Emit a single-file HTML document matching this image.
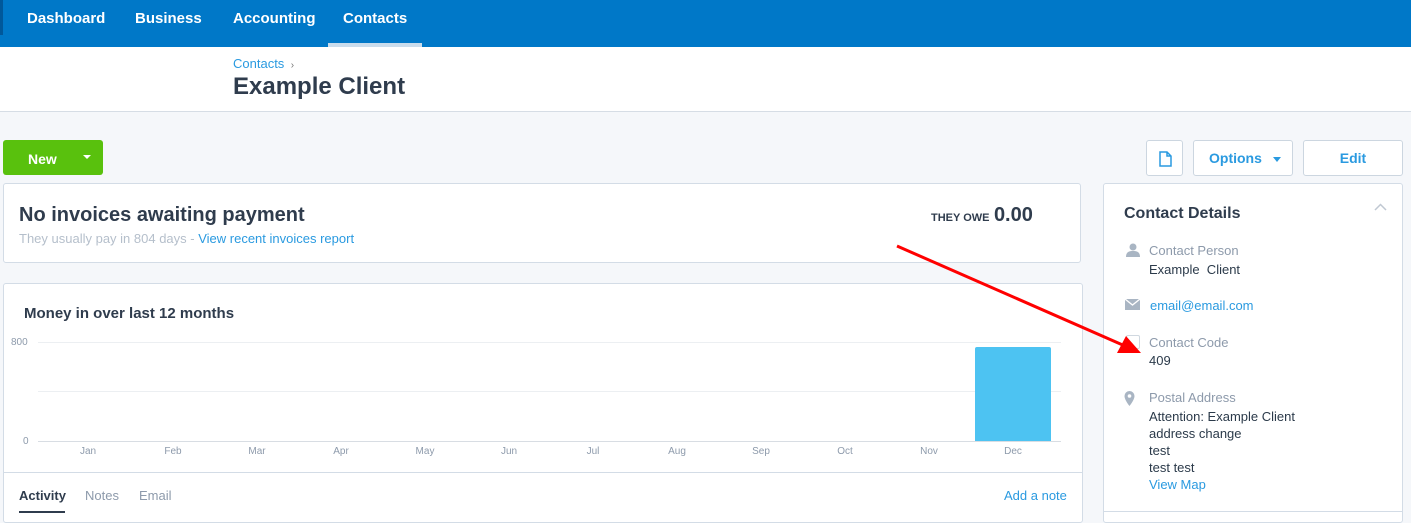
<!DOCTYPE html>
<html><head><meta charset="utf-8"><style>
*{box-sizing:border-box;margin:0;padding:0}
body{width:1411px;height:514px;overflow:hidden;background:#f5f7fa;font-family:"Liberation Sans",Arial,sans-serif;position:relative;color:#2b3a4a}
.a{position:absolute}
.nav{left:0;top:0;width:1411px;height:47px;background:#0078c8}
.nav span{position:absolute;top:10px;color:#fff;font-weight:bold;font-size:15px}
.hdr{left:0;top:47px;width:1411px;height:65px;background:#fff;border-bottom:1px solid #d6dde5}
.card{background:#fff;border:1px solid #d3dce6;border-radius:3px}
.btn{background:#fff;border:1px solid #ccd6e0;border-radius:3px;color:#2a9ae0;font-weight:bold;font-size:14px;text-align:center;line-height:34px}
.lbl{font-size:13px;color:#8d9aab}
.val{font-size:13px;color:#2b3a4a}
.link{color:#2a9ae0}
.m{font-size:10px;color:#8d9aab;top:446px;width:40px;text-align:center}
</style></head><body>
<div class="a nav">
<div class="a" style="left:0;top:0;width:3px;height:35px;background:#00589a"></div>
<span style="left:27px">Dashboard</span><span style="left:135px">Business</span><span style="left:233px">Accounting</span><span style="left:343px">Contacts</span>
<div class="a" style="left:328px;top:43px;width:94px;height:4px;background:#c9dcec"></div>
</div>
<div class="a hdr">
<div class="a link" style="left:233px;top:9px;font-size:13px">Contacts <span style="color:#777;font-size:10px">&nbsp;›</span></div>
<div class="a" style="left:233px;top:26px;font-size:24px;font-weight:bold;color:#2f3c4d">Example Client</div>
</div>

<div class="a" style="left:3px;top:140px;width:100px;height:35px;background:#59c10d;border-radius:3px;color:#fff;font-weight:bold;font-size:14px">
<span class="a" style="left:25px;top:11px">New</span>
<span class="a" style="left:80px;top:15px;width:0;height:0;border-left:4px solid transparent;border-right:4px solid transparent;border-top:4px solid #fff"></span></div>

<div class="a btn" style="left:1146px;top:140px;width:37px;height:36px">
<svg class="a" style="left:12px;top:10px" width="13" height="16" viewBox="0 0 13 16"><path d="M1 1h7l4 4v10H1z M8 1v4h4" fill="none" stroke="#2a9ae0" stroke-width="1.5"/></svg></div>
<div class="a btn" style="left:1193px;top:140px;width:100px;height:36px;text-align:left;padding-left:15px">Options<span class="a" style="left:79px;top:16px;width:0;height:0;border-left:4px solid transparent;border-right:4px solid transparent;border-top:5px solid #2a9ae0"></span></div>
<div class="a btn" style="left:1303px;top:140px;width:100px;height:36px">Edit</div>

<div class="a card" style="left:3px;top:183px;width:1078px;height:80px">
<div class="a" style="left:15px;top:20px;font-size:20px;font-weight:bold;color:#2f3c4d">No invoices awaiting payment</div>
<div class="a" style="left:15px;top:47px;font-size:13px;color:#b5bfcb">They usually pay in 804 days - <span class="link">View recent invoices report</span></div>
<div class="a" style="left:927px;top:20px;color:#2f3c4d"><span style="font-size:11px;font-weight:bold">THEY OWE</span> <span style="font-size:20px;font-weight:bold">0.00</span></div>
</div>

<div class="a card" style="left:3px;top:283px;width:1080px;height:240px"></div>
<div class="a" style="left:24px;top:305px;font-size:15px;font-weight:bold;color:#2f3c4d">Money in over last 12 months</div>
<div class="a" style="left:11px;top:337px;font-size:10px;color:#8d9aab">800</div>
<div class="a" style="left:23px;top:436px;font-size:10px;color:#8d9aab">0</div>
<div class="a" style="left:38px;top:342px;width:1023px;height:1px;background:#eceff2"></div>
<div class="a" style="left:38px;top:391px;width:1023px;height:1px;background:#eceff2"></div>
<div class="a" style="left:38px;top:441px;width:1023px;height:1px;background:#d8dde3"></div>
<div class="a" style="left:975px;top:347px;width:76px;height:94px;background:#4dc3f2;border-radius:2px 2px 0 0"></div>
<div class="a m" style="left:68px">Jan</div><div class="a m" style="left:153px">Feb</div><div class="a m" style="left:237px">Mar</div><div class="a m" style="left:321px">Apr</div><div class="a m" style="left:405px">May</div><div class="a m" style="left:489px">Jun</div><div class="a m" style="left:573px">Jul</div><div class="a m" style="left:657px">Aug</div><div class="a m" style="left:741px">Sep</div><div class="a m" style="left:825px">Oct</div><div class="a m" style="left:909px">Nov</div><div class="a m" style="left:993px">Dec</div>
<div class="a" style="left:4px;top:472px;width:1078px;height:1px;background:#d3dce6"></div>
<div class="a" style="left:19px;top:488px;font-size:13px;font-weight:bold;color:#2f3c4d">Activity</div>
<div class="a" style="left:19px;top:511px;width:46px;height:2px;background:#2f3c4d"></div>
<div class="a" style="left:85px;top:488px;font-size:13px;color:#8d9aab">Notes</div>
<div class="a" style="left:139px;top:488px;font-size:13px;color:#8d9aab">Email</div>
<div class="a link" style="left:1004px;top:488px;font-size:13px">Add a note</div>

<div class="a card" style="left:1103px;top:183px;width:300px;height:340px"></div>
<div class="a" style="left:1124px;top:205px;font-size:16px;font-weight:bold;color:#2f3c4d">Contact Details</div>
<svg class="a" style="left:1374px;top:203px" width="13" height="8"><path d="M1 7l5.5-5.5L12 7" fill="none" stroke="#c0c8d2" stroke-width="1.5"/></svg>
<svg class="a" style="left:1126px;top:243px" width="14" height="14"><circle cx="7" cy="4" r="3.5" fill="#a9b5c3"/><path d="M0 14c0-5 3-6 7-6s7 1 7 6z" fill="#a9b5c3"/></svg>
<div class="a lbl" style="left:1149px;top:243px">Contact Person</div>
<div class="a val" style="left:1149px;top:262px">Example&nbsp; Client</div>
<svg class="a" style="left:1125px;top:299px" width="15" height="11"><rect width="15" height="11" fill="#a9b5c3"/><path d="M0 0l7.5 6L15 0" fill="none" stroke="#fff" stroke-width="1.3"/></svg>
<div class="a link" style="left:1150px;top:298px;font-size:13px">email@email.com</div>
<div class="a" style="left:1126px;top:335px;width:14px;height:14px;border:1px solid #d0d8e0;border-radius:2px"></div>
<div class="a lbl" style="left:1149px;top:335px">Contact Code</div>
<div class="a val" style="left:1149px;top:353px">409</div>
<svg class="a" style="left:1124px;top:391px" width="11" height="15"><path d="M5.5 0a5 5 0 0 1 5 5c0 4-5 10-5 10S.5 9 .5 5a5 5 0 0 1 5-5z" fill="#a9b5c3"/><circle cx="5.5" cy="5" r="1.8" fill="#fff"/></svg>
<div class="a lbl" style="left:1149px;top:390px">Postal Address</div>
<div class="a val" style="left:1149px;top:408px;line-height:17px">Attention: Example Client<br>address change<br>test<br>test test<br><span class="link">View Map</span></div>
<div class="a" style="left:1104px;top:511px;width:298px;height:1px;background:#d3dce6"></div>

<svg class="a" style="left:0;top:0" width="1411" height="514"><line x1="897" y1="246" x2="1125" y2="346" stroke="#f00" stroke-width="3"/><path d="M1141 353L1117 353L1126 336z" fill="#f00"/></svg>
</body></html>
